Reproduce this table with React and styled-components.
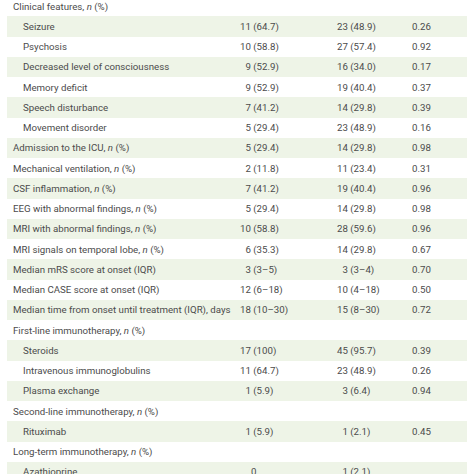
import React from "react";
import styled, { createGlobalStyle } from "styled-components";

const GlobalStyle = createGlobalStyle`
  html, body {
    margin: 0;
    padding: 0;
    background: #ffffff;
  }
  body {
    font-family: Roboto, "Liberation Sans", Arial, sans-serif;
    color: #4b4b4b;
  }
`;

const Table = styled.div`
  width: 460px;
  margin: -4px 0 0 7px;
  display: grid;
  grid-template-columns: 233px 97px 75px 55px;
  grid-auto-rows: 20.25px;
  font-size: 9.7px;
`;

const Row = styled.div`
  display: contents;

  & > div {
    background: ${(p) => (p.$shaded ? "#eef4e7" : "#ffffff")};
  }
`;

const Label = styled.div`
  display: flex;
  align-items: center;
  padding-left: ${(p) => (p.$indent ? "16px" : "6px")};
  white-space: nowrap;
`;

const Value = styled.div`
  display: flex;
  align-items: center;
  white-space: pre;
`;

const rows = [
  ["Clinical features, n (%)", null],
  ["Seizure", ["11 (64.7)", "23 (48.9)", "0.26"], true],
  ["Psychosis", ["10 (58.8)", "27 (57.4)", "0.92"], true],
  ["Decreased level of consciousness", ["\u20079 (52.9)", "16 (34.0)", "0.17"], true],
  ["Memory deficit", ["\u20079 (52.9)", "19 (40.4)", "0.37"], true],
  ["Speech disturbance", ["\u20077 (41.2)", "14 (29.8)", "0.39"], true],
  ["Movement disorder", ["\u20075 (29.4)", "23 (48.9)", "0.16"], true],
  ["Admission to the ICU, n (%)", ["\u20075 (29.4)", "14 (29.8)", "0.98"]],
  ["Mechanical ventilation, n (%)", ["\u20072 (11.8)", "11 (23.4)", "0.31"]],
  ["CSF inflammation, n (%)", ["\u20077 (41.2)", "19 (40.4)", "0.96"]],
  ["EEG with abnormal findings, n (%)", ["\u20075 (29.4)", "14 (29.8)", "0.98"]],
  ["MRI with abnormal findings, n (%)", ["10 (58.8)", "28 (59.6)", "0.96"]],
  ["MRI signals on temporal lobe, n (%)", ["\u20076 (35.3)", "14 (29.8)", "0.67"]],
  ["Median mRS score at onset (IQR)", ["\u20073 (3–5)", "\u20073 (3–4)", "0.70"]],
  ["Median CASE score at onset (IQR)", ["12 (6–18)", "10 (4–18)", "0.50"]],
  ["Median time from onset until treatment (IQR), days", ["18 (10–30)", "15 (8–30)", "0.72"]],
  ["First-line immunotherapy, n (%)", null],
  ["Steroids", ["17 (100)", "45 (95.7)", "0.39"], true],
  ["Intravenous immunoglobulins", ["11 (64.7)", "23 (48.9)", "0.26"], true],
  ["Plasma exchange", ["\u20071 (5.9)", "\u20073 (6.4)", "0.94"], true],
  ["Second-line immunotherapy, n (%)", null],
  ["Rituximab", ["\u20071 (5.9)", "\u20071 (2.1)", "0.45"], true],
  ["Long-term immunotherapy, n (%)", null],
  ["Azathioprine", ["\u2007\u20070", "\u20071 (2.1)", ""], true],
];

// put the statistical "n" in italics
function renderLabel(text) {
  const parts = text.split(", n (%)");
  if (parts.length === 1) return <span>{text}</span>;
  return (
    <span>
      {parts[0]}, <i>n</i> (%)
    </span>
  );
}

export default function App() {
  return (
    <>
      <GlobalStyle />
      <Table>
        {rows.map(([label, values, indent], i) => (
          <Row key={i} $shaded={i % 2 === 1}>
            <Label $indent={indent}>{renderLabel(label)}</Label>
            <Value>{values ? values[0] : ""}</Value>
            <Value>{values ? values[1] : ""}</Value>
            <Value>{values ? values[2] : ""}</Value>
          </Row>
        ))}
      </Table>
    </>
  );
}
